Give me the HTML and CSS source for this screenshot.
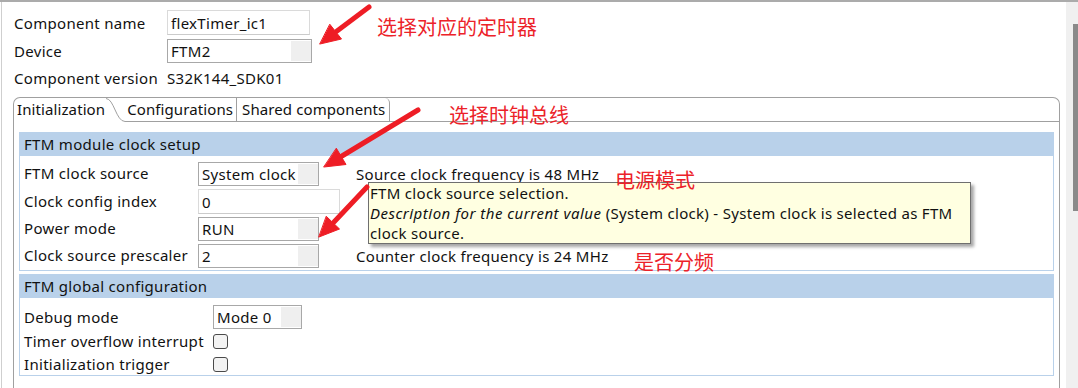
FILE: index.html
```html
<!DOCTYPE html>
<html lang="en">
<head>
    <meta charset="UTF-8">
    <title>flexTimer_ic1 - Component Inspector</title>
    <link rel="stylesheet" href="styles.css">
</head>
<body>
    <div class="window">
        <div class="main">
            <div class="top-form">
                <div class="label">Component name</div>
                <div class="field w143">flexTimer_ic1</div>

                <div class="label">Device</div>
                <div class="combo w145"><span>FTM2</span><i class="btn"></i></div>

                <div class="label">Component version</div>
                <div class="value">S32K144_SDK01</div>
            </div>

            <div class="folder">
                <div class="tabs">
                    <div class="tab active">Initialization<svg class="slant" width="19" height="24" viewBox="0 0 19 24"><path d="M0 0.5 C8 0.5 10 23.5 19 23.5" fill="#fff" stroke="#a0a0a0" stroke-width="1"/></svg></div>
                    <div class="tab">Configurations</div>
                    <div class="tab last">Shared components</div>
                    <div class="tab-fill"></div>
                </div>

                <div class="panel">
                    <div class="group">
                        <div class="group-head">FTM module clock setup</div>
                        <div class="group-body clock">
                            <div class="label">FTM clock source</div>
                            <div class="combo w121"><span>System clock</span><i class="btn"></i></div>
                            <div class="info">Source clock frequency is 48 MHz</div>

                            <div class="label">Clock config index</div>
                            <div class="field w142">0</div>
                            <div></div>

                            <div class="label">Power mode</div>
                            <div class="combo w121"><span>RUN</span><i class="btn"></i></div>
                            <div></div>

                            <div class="label">Clock source prescaler</div>
                            <div class="combo w121"><span>2</span><i class="btn"></i></div>
                            <div class="info">Counter clock frequency is 24 MHz</div>
                        </div>
                    </div>

                    <div class="group">
                        <div class="group-head">FTM global configuration</div>
                        <div class="group-body global">
                            <div class="label">Debug mode</div>
                            <div class="combo w89"><span>Mode 0</span><i class="btn"></i></div>

                            <div class="label">Timer overflow interrupt</div>
                            <div class="check-cell"><i class="check"></i></div>

                            <div class="label">Initialization trigger</div>
                            <div class="check-cell"><i class="check"></i></div>
                        </div>
                    </div>
                </div>
            </div>
        </div>
        <div class="scrollbar"><div class="thumb"></div></div>
    </div>

    <div class="tooltip">
        <div>FTM clock source selection.</div>
        <div><em>Description for the current value</em> (System clock) - System clock is selected as FTM</div>
        <div>clock source.</div>
    </div>

    <svg class="arrows" width="1078" height="388" viewBox="0 0 1078 388">
        <g stroke="#ee1d25" stroke-width="5" stroke-linecap="round" fill="#ee1d25">
            <line x1="369" y1="7" x2="337" y2="31"/>
            <polygon points="320,44 341.5,39 330,24.5" stroke-width="1"/>
            <line x1="418" y1="110" x2="342" y2="156"/>
            <polygon points="324,167 346,164.5 336.5,148.5" stroke-width="1"/>
            <line x1="367" y1="187" x2="334" y2="222"/>
            <polygon points="319,237 339.5,229 326.5,216.5" stroke-width="1"/>
        </g>
    </svg>

    <div class="note n1">选择对应的定时器</div>
    <div class="note n2">选择时钟总线</div>
    <div class="note n3">电源模式</div>
    <div class="note n4">是否分频</div>
</body>
</html>
```

FILE: styles.css
```css
* {
    box-sizing: border-box;
}

body {
    margin: 0;
    width: 1078px;
    height: 388px;
    overflow: hidden;
    position: relative;
    background: #fff;
    color: #111;
    font-family: "Noto Sans", "Open Sans", sans-serif;
    font-size: 15px;
    letter-spacing: 0.3px;
}

.window {
    display: flex;
    height: 388px;
    border-top: 2px solid #ababab;
}

.main {
    flex: 1;
    margin-left: 1px;
    border-left: 1px solid #cfcfcf;
    padding: 8px 6px 0 11px;
    display: flex;
    flex-direction: column;
}

.scrollbar {
    width: 12px;
    background: #f0f0f0;
    padding-top: 22px;
    display: flex;
    justify-content: flex-end;
}

.thumb {
    width: 5px;
    height: 187px;
    background: #8a8a8a;
}

/* header fields */
.top-form {
    display: grid;
    grid-template-columns: 153px auto;
    grid-template-rows: 25px 24px 22px;
    row-gap: 4px;
    margin-left: 1px;
    align-items: center;
}

.top-form .label,
.top-form .value {
    white-space: nowrap;
}

.field {
    height: 100%;
    border: 1px solid #dadada;
    border-bottom-color: #cbcbcb;
    padding-left: 3px;
    display: flex;
    align-items: center;
    background: #fff;
}

.combo {
    height: 100%;
    display: flex;
    border: 1px solid #a8a8a8;
    background: #fff;
}

.combo span {
    flex: 1;
    padding-left: 3px;
    display: flex;
    align-items: center;
    white-space: nowrap;
    overflow: hidden;
}

.combo .btn {
    width: 20px;
    margin: 1px 0 1px 0;
    background: #efefef;
}

.w143 { width: 143px; }
.w145 { width: 145px; }
.w142 { width: 142px; }
.w121 { width: 121px; }
.w89 { width: 89px; }

/* tab folder */
.folder {
    flex: 1;
    margin-top: 8px;
    border: 1px solid #a0a0a0;
    border-bottom: none;
    border-radius: 7px 7px 0 0;
}

.tabs {
    display: flex;
    height: 24px;
    letter-spacing: 0.1px;
}

.tab {
    display: flex;
    align-items: center;
    white-space: nowrap;
    border-bottom: 1px solid #a0a0a0;
    padding: 0 3px 1px 2px;
    border-right: 1px solid #a0a0a0;
}

.tab.active {
    padding: 0 0 1px 3px;
    border-right: none;
    border-bottom-color: transparent;
}

.slant {
    display: block;
    margin-left: 1px;
    align-self: flex-start;
}

.tab.last {
    padding-left: 5px;
    padding-right: 4px;
    border-top-right-radius: 5px;
}

.tab-fill {
    flex: 1;
    border-bottom: 1px solid #a0a0a0;
}

.panel {
    padding: 10px 5px 0 5px;
}

.group {
    border: 1px solid #b9d1ea;
    margin-bottom: 3px;
}

.group-head {
    height: 23px;
    background: #b9d1ea;
    padding: 0 0 2px 4px;
    display: flex;
    align-items: center;
}

.group-body {
    display: grid;
    padding: 6px 4px 3px 4px;
    align-items: center;
}

.group-body.clock {
    grid-template-columns: 174px 158px auto;
    grid-template-rows: 24px 25px 24px 24px;
    row-gap: 3px;
    padding-bottom: 2px;
}

.group-body.clock .label {
    padding-bottom: 2px;
}

.group-body.global {
    grid-template-columns: 189px auto;
    grid-template-rows: 24px 24px 22px;
    row-gap: 0;
    padding: 7px 4px 0 4px;
}

.label,
.info {
    white-space: nowrap;
}

.check-cell {
    display: flex;
    align-items: center;
}

.check {
    display: block;
    width: 15px;
    height: 15px;
    border: 1px solid #4a4a4a;
    border-radius: 3px;
    background: #f3f3f3;
}

/* overlay: tooltip, annotations */
.tooltip {
    position: absolute;
    left: 368px;
    top: 182px;
    width: 603px;
    height: 62px;
    border: 1px solid #6f6f6f;
    background: #ffffe1;
    box-shadow: 3px 3px 3px rgba(0, 0, 0, 0.35);
    padding-left: 1px;
    line-height: 20px;
    white-space: nowrap;
}

.tooltip em {
    letter-spacing: 0.5px;
}

.arrows {
    position: absolute;
    left: 0;
    top: 0;
    pointer-events: none;
}

.note {
    position: absolute;
    color: #ec2229;
    font-family: "Noto Sans CJK SC", sans-serif;
    font-size: 20px;
    line-height: 20px;
    letter-spacing: 0;
    white-space: nowrap;
}

.n1 { left: 377px; top: 17px; }
.n2 { left: 449px; top: 105px; }
.n3 { left: 615px; top: 170px; }
.n4 { left: 634px; top: 252px; }
```
